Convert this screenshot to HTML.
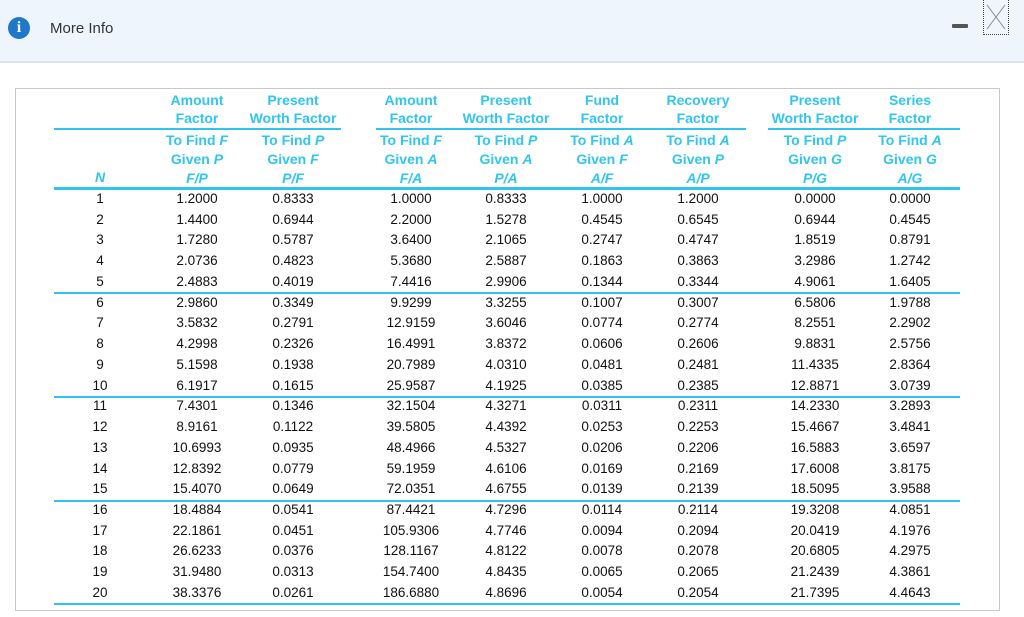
<!DOCTYPE html>
<html><head><meta charset="utf-8"><style>
body{margin:0;width:1024px;height:617px;background:#fff;font-family:"Liberation Sans",Arial,sans-serif;position:relative;overflow:hidden}
.hdr{position:absolute;left:0;top:0;width:1024px;height:61px;background:#eff5fd;border-bottom:2px solid #d6e6f6}
.icon{position:absolute;left:8px;top:17px;width:22px;height:22px;border-radius:50%;background:#1e77c9;color:#fff;font:bold 16px/22px "Liberation Serif",serif;text-align:center}
.title{position:absolute;left:50px;top:20px;font-size:15px;color:#333}
.minus{position:absolute;left:952px;top:24px;width:16px;height:4px;background:#555;border-radius:1px}
.xbox{position:absolute;left:983px;top:-1px;width:24px;height:34px;border:1px dotted #444}
.box{position:absolute;left:15px;top:88px;width:983px;height:521px;border:1px solid #c8c8c8}
.ln{position:absolute;height:2px;background:#2ec3f0}
.c{position:absolute;text-align:center;font-size:13.5px}
.h{color:#30c6f2;font-weight:bold;line-height:18px;font-size:14px}
.d{color:#111;line-height:20.74px}
i{font-style:italic}
</style></head><body>
<div class="hdr"><div class="icon">i</div><div class="title">More Info</div><div class="minus"></div>
<div class="xbox"><svg width="24" height="34"><path d="M3 5L21 29M21 5L3 29" stroke="#888" stroke-width="1"/></svg></div></div>
<div class="box"></div>
<div class="ln" style="left:54px;width:287px;top:128px;height:1.5px"></div>
<div class="ln" style="left:376px;width:370px;top:128px;height:1.5px"></div>
<div class="ln" style="left:768px;width:192px;top:128px;height:1.5px"></div>
<div class="ln" style="left:54px;width:906px;top:187px;height:3px"></div>
<div class="ln" style="left:54px;width:906px;top:292px;height:1.5px"></div>
<div class="ln" style="left:54px;width:906px;top:396px;height:1.5px"></div>
<div class="ln" style="left:54px;width:906px;top:500px;height:1.5px"></div>
<div class="ln" style="left:54px;width:906px;top:603px;height:1.5px"></div>

<div class="c h" style="left:50px;width:100px;top:168px"><i>N</i></div>

<div class="c h" style="left:147px;width:100px;top:91px">Amount<br>Factor</div>
<div class="c h" style="left:147px;width:100px;top:131px;line-height:19px">To Find <i>F</i><br>Given <i>P</i><br><i>F/P</i></div>
<div class="c h" style="left:243px;width:100px;top:91px">Present<br>Worth Factor</div>
<div class="c h" style="left:243px;width:100px;top:131px;line-height:19px">To Find <i>P</i><br>Given <i>F</i><br><i>P/F</i></div>
<div class="c h" style="left:361px;width:100px;top:91px">Amount<br>Factor</div>
<div class="c h" style="left:361px;width:100px;top:131px;line-height:19px">To Find <i>F</i><br>Given <i>A</i><br><i>F/A</i></div>
<div class="c h" style="left:456px;width:100px;top:91px">Present<br>Worth Factor</div>
<div class="c h" style="left:456px;width:100px;top:131px;line-height:19px">To Find <i>P</i><br>Given <i>A</i><br><i>P/A</i></div>
<div class="c h" style="left:552px;width:100px;top:91px">Fund<br>Factor</div>
<div class="c h" style="left:552px;width:100px;top:131px;line-height:19px">To Find <i>A</i><br>Given <i>F</i><br><i>A/F</i></div>
<div class="c h" style="left:648px;width:100px;top:91px">Recovery<br>Factor</div>
<div class="c h" style="left:648px;width:100px;top:131px;line-height:19px">To Find <i>A</i><br>Given <i>P</i><br><i>A/P</i></div>
<div class="c h" style="left:765px;width:100px;top:91px">Present<br>Worth Factor</div>
<div class="c h" style="left:765px;width:100px;top:131px;line-height:19px">To Find <i>P</i><br>Given <i>G</i><br><i>P/G</i></div>
<div class="c h" style="left:860px;width:100px;top:91px">Series<br>Factor</div>
<div class="c h" style="left:860px;width:100px;top:131px;line-height:19px">To Find <i>A</i><br>Given <i>G</i><br><i>A/G</i></div>

<div class="c d" style="left:50px;width:100px;top:189px">1<br>2<br>3<br>4<br>5<br>6<br>7<br>8<br>9<br>10<br>11<br>12<br>13<br>14<br>15<br>16<br>17<br>18<br>19<br>20</div>
<div class="c d" style="left:147px;width:100px;top:189px">1.2000<br>1.4400<br>1.7280<br>2.0736<br>2.4883<br>2.9860<br>3.5832<br>4.2998<br>5.1598<br>6.1917<br>7.4301<br>8.9161<br>10.6993<br>12.8392<br>15.4070<br>18.4884<br>22.1861<br>26.6233<br>31.9480<br>38.3376</div>
<div class="c d" style="left:243px;width:100px;top:189px">0.8333<br>0.6944<br>0.5787<br>0.4823<br>0.4019<br>0.3349<br>0.2791<br>0.2326<br>0.1938<br>0.1615<br>0.1346<br>0.1122<br>0.0935<br>0.0779<br>0.0649<br>0.0541<br>0.0451<br>0.0376<br>0.0313<br>0.0261</div>
<div class="c d" style="left:361px;width:100px;top:189px">1.0000<br>2.2000<br>3.6400<br>5.3680<br>7.4416<br>9.9299<br>12.9159<br>16.4991<br>20.7989<br>25.9587<br>32.1504<br>39.5805<br>48.4966<br>59.1959<br>72.0351<br>87.4421<br>105.9306<br>128.1167<br>154.7400<br>186.6880</div>
<div class="c d" style="left:456px;width:100px;top:189px">0.8333<br>1.5278<br>2.1065<br>2.5887<br>2.9906<br>3.3255<br>3.6046<br>3.8372<br>4.0310<br>4.1925<br>4.3271<br>4.4392<br>4.5327<br>4.6106<br>4.6755<br>4.7296<br>4.7746<br>4.8122<br>4.8435<br>4.8696</div>
<div class="c d" style="left:552px;width:100px;top:189px">1.0000<br>0.4545<br>0.2747<br>0.1863<br>0.1344<br>0.1007<br>0.0774<br>0.0606<br>0.0481<br>0.0385<br>0.0311<br>0.0253<br>0.0206<br>0.0169<br>0.0139<br>0.0114<br>0.0094<br>0.0078<br>0.0065<br>0.0054</div>
<div class="c d" style="left:648px;width:100px;top:189px">1.2000<br>0.6545<br>0.4747<br>0.3863<br>0.3344<br>0.3007<br>0.2774<br>0.2606<br>0.2481<br>0.2385<br>0.2311<br>0.2253<br>0.2206<br>0.2169<br>0.2139<br>0.2114<br>0.2094<br>0.2078<br>0.2065<br>0.2054</div>
<div class="c d" style="left:765px;width:100px;top:189px">0.0000<br>0.6944<br>1.8519<br>3.2986<br>4.9061<br>6.5806<br>8.2551<br>9.8831<br>11.4335<br>12.8871<br>14.2330<br>15.4667<br>16.5883<br>17.6008<br>18.5095<br>19.3208<br>20.0419<br>20.6805<br>21.2439<br>21.7395</div>
<div class="c d" style="left:860px;width:100px;top:189px">0.0000<br>0.4545<br>0.8791<br>1.2742<br>1.6405<br>1.9788<br>2.2902<br>2.5756<br>2.8364<br>3.0739<br>3.2893<br>3.4841<br>3.6597<br>3.8175<br>3.9588<br>4.0851<br>4.1976<br>4.2975<br>4.3861<br>4.4643</div>
</body></html>
